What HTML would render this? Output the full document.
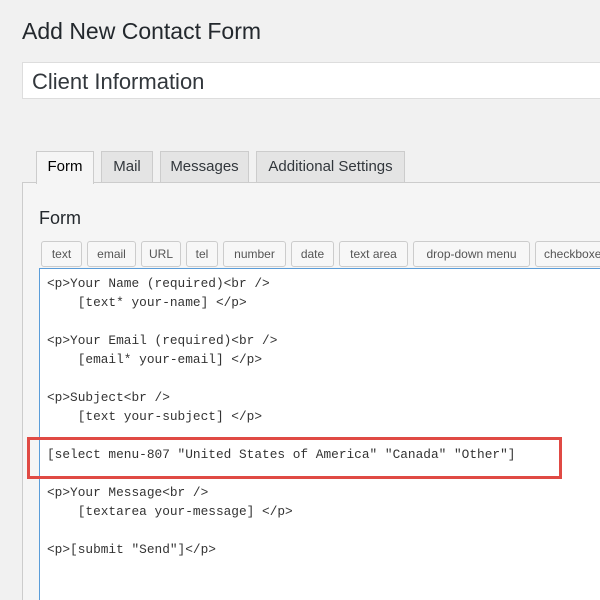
<!DOCTYPE html>
<html style="overflow:hidden;height:600px"><head><style>
body{margin:0;width:600px;height:600px;overflow:hidden;background:#f1f1f1;font-family:"Liberation Sans",sans-serif;position:relative;color:#23282d}
.a{position:absolute}
h1{position:absolute;left:22px;top:18px;margin:0;font-size:23px;font-weight:normal;color:#23282d}
.title{left:22px;top:62px;width:578px;height:37px;background:#fff;border:1px solid #ddd;border-right:none;box-sizing:border-box;font-size:22px;padding:6px 9px;color:#32373c}
.tab{top:151px;height:31px;box-sizing:border-box;border:1px solid #ccc;border-bottom:none;background:#e4e4e4;font-size:15px;text-align:center;line-height:30px;color:#32373c}
.panel{left:22px;top:182px;width:578px;height:418px;box-sizing:border-box;border:1px solid #ccc;border-right:none;border-bottom:none;background:#f5f5f5}
.btn{top:241px;height:26px;box-sizing:border-box;border:1px solid #ccc;border-radius:3px;background:#f7f7f7;font-size:12px;line-height:24px;text-align:center;color:#555}
.ta{left:39px;top:268px;width:561px;height:332px;box-sizing:border-box;border:1px solid #5b9dd9;border-right:none;border-bottom:none;background:#fff}
pre{position:absolute;left:47px;top:274px;margin:0;font-family:"Liberation Mono",monospace;font-size:12.8px;line-height:19px;color:#333;letter-spacing:0px}
.red{left:27px;top:437px;width:535px;height:42px;box-sizing:border-box;border:3px solid #e04a44}
</style></head><body>
<h1>Add New Contact Form</h1>
<div class="a title">Client Information</div>
<div class="a panel"></div>
<div class="a tab" style="left:36px;width:58px;background:#f5f5f5;height:33px;color:#000">Form</div>
<div class="a tab" style="left:101px;width:52px">Mail</div>
<div class="a tab" style="left:160px;width:89px">Messages</div>
<div class="a tab" style="left:256px;width:149px">Additional Settings</div>
<div class="a" style="left:39px;top:208px;font-size:18px;color:#23282d">Form</div>
<div class="a btn" style="left:41px;width:41px">text</div>
<div class="a btn" style="left:87px;width:49px">email</div>
<div class="a btn" style="left:141px;width:40px">URL</div>
<div class="a btn" style="left:186px;width:32px">tel</div>
<div class="a btn" style="left:223px;width:63px">number</div>
<div class="a btn" style="left:291px;width:43px">date</div>
<div class="a btn" style="left:339px;width:69px">text area</div>
<div class="a btn" style="left:413px;width:117px">drop-down menu</div>
<div class="a btn" style="left:535px;width:80px;text-align:left;padding-left:8px">checkboxes</div>
<div class="a ta"></div>
<pre>&lt;p&gt;Your Name (required)&lt;br /&gt;
    [text* your-name] &lt;/p&gt;

&lt;p&gt;Your Email (required)&lt;br /&gt;
    [email* your-email] &lt;/p&gt;

&lt;p&gt;Subject&lt;br /&gt;
    [text your-subject] &lt;/p&gt;

[select menu-807 "United States of America" "Canada" "Other"]

&lt;p&gt;Your Message&lt;br /&gt;
    [textarea your-message] &lt;/p&gt;

&lt;p&gt;[submit "Send"]&lt;/p&gt;</pre>
<div class="a red"></div>
</body></html>
